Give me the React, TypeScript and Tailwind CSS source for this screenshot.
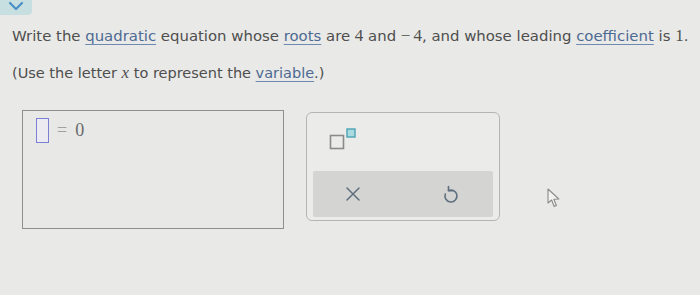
import React from 'react';

const Link = ({ children }: { children: React.ReactNode }) => (
  <span className="text-[#4d6a93] underline decoration-[#6f8ab0] underline-offset-[3px]">{children}</span>
);

const M = ({ children, italic }: { children: React.ReactNode; italic?: boolean }) => (
  <span className={`font-['Liberation_Serif',serif] text-[17px] ${italic ? 'italic' : ''}`}>{children}</span>
);

export default function App() {
  return (
    <div className="w-[700px] h-[295px] bg-[#e9e9e7] relative overflow-hidden font-['DejaVu_Sans',sans-serif] text-[#4e4e4e]">
      {/* collapse badge */}
      <div className="absolute left-0 top-0 w-[32px] h-[15px] bg-[#c8dfe1] rounded-br-[4px] flex items-start justify-center">
        <svg width="16" height="10" viewBox="0 0 16 10" className="mt-[1px]">
          <path d="M2 2 L8 8 L14 2" fill="none" stroke="#4a90c4" strokeWidth="2.2" strokeLinecap="round" strokeLinejoin="round" />
        </svg>
      </div>

      <div className="pt-[25px] pl-[12px] text-[14.5px] leading-[22px]">
        <p className="text-[14.9px]">
          Write the <Link>quadratic</Link> equation whose <Link>roots</Link> are <M>4</M> and{' '}
          <M>
            <span className="mr-[3px]">−</span>4
          </M>
          , and whose leading <Link>coefficient</Link> is <M>1</M>.
        </p>
        <p className="mt-[15px]">
          (Use the letter <M italic>x</M> to represent the <Link>variable</Link>.)
        </p>
      </div>

      <div className="flex items-start mt-[26px] pl-[22px] gap-[22px]">
        {/* answer box */}
        <div className="w-[262px] h-[119px] border border-[#8f8f8f] bg-[#e8e8e6] px-[13px] pt-[6px]">
          <div className="flex items-center gap-[8px]">
            <div className="w-[13px] h-[25px] border-[1.5px] border-[#7b7fd6] bg-[#ecebf2]" />
            <span className="font-['Liberation_Serif',serif] text-[18px] text-[#a0a0a0]">=</span>
            <span className="font-['Liberation_Serif',serif] text-[18px] text-[#6a6a6a]">0</span>
          </div>
        </div>

        {/* toolbar */}
        <div className="mt-[2px] w-[194px] h-[109px] border border-[#b5b5b5] rounded-[6px] bg-[#ebebe9] px-[6px] pt-[14px] flex flex-col">
          <div className="pl-[16px] h-[38px]">
            <svg width="30" height="24" viewBox="0 0 30 24">
              <rect x="1.5" y="8.5" width="13" height="13" fill="none" stroke="#8a8a8a" strokeWidth="1.6" />
              <rect x="18" y="2" width="8" height="8" fill="#a9dbe0" stroke="#4aa4b4" strokeWidth="1.4" />
            </svg>
          </div>
          <div className="mt-[6px] h-[46px] bg-[#d4d4d2] rounded-[2px] flex items-center pl-[32px] gap-[82px]">
            <svg width="16" height="16" viewBox="0 0 16 16">
              <path d="M2 2 L14 14 M14 2 L2 14" stroke="#5f6f7f" strokeWidth="1.5" strokeLinecap="round" />
            </svg>
            <svg width="16" height="20" viewBox="0 0 16 20" className="mt-[2px]">
              <path d="M5.5 5.5 A6 6 0 1 1 2.3 9" fill="none" stroke="#5f6f7f" strokeWidth="1.6" strokeLinecap="round" />
              <path d="M5.5 1.5 L5.5 5.7 L9.5 5.7" fill="none" stroke="#5f6f7f" strokeWidth="1.6" strokeLinecap="round" strokeLinejoin="round" />
            </svg>
          </div>
        </div>

        {/* mouse cursor */}
        <svg width="14" height="22" viewBox="0 0 14 22" className="mt-[78px] ml-[25px]">
          <path d="M1 1 L1 15 L4.6 12 L7.2 18.5 L9.4 17.5 L6.9 11.3 L11.8 11 Z" fill="#f2f2f0" stroke="#8a8a8a" strokeWidth="1.1" strokeLinejoin="round" />
        </svg>
      </div>
    </div>
  );
}
